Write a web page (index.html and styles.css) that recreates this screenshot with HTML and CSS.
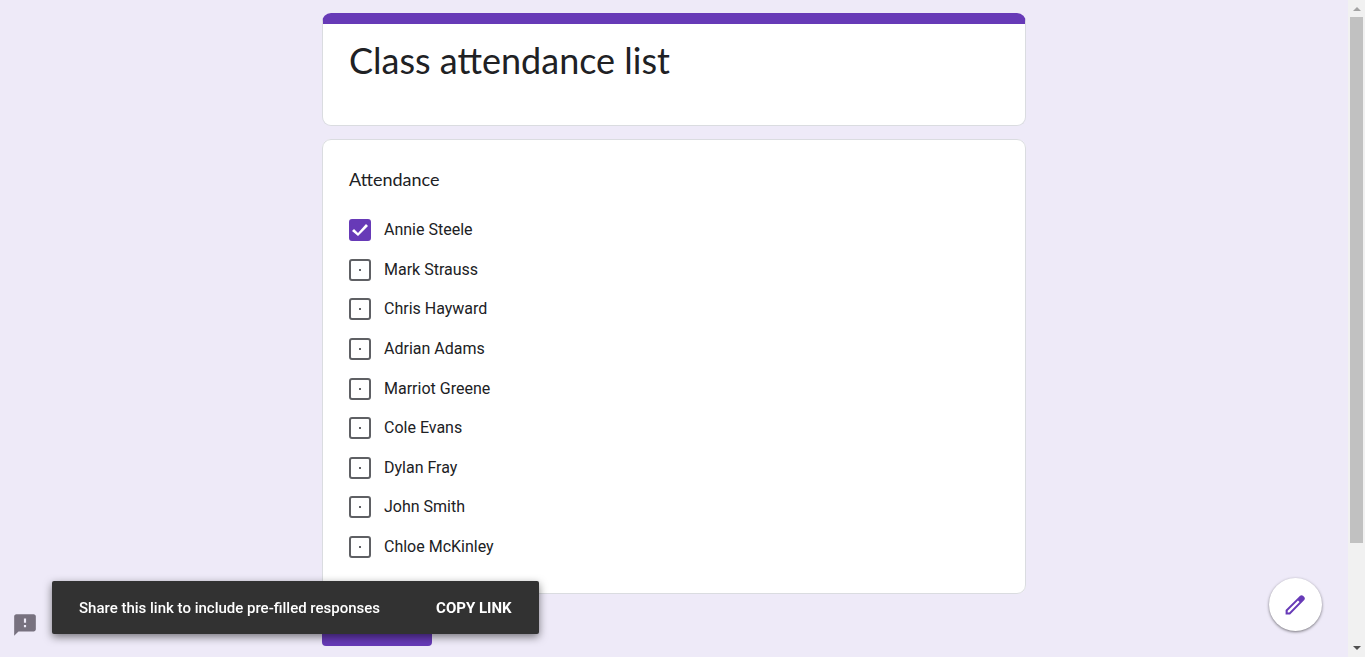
FILE: index.html
```html
<!DOCTYPE html>
<html lang="en">
<head>
    <meta charset="UTF-8">
    <meta name="viewport" content="width=device-width, initial-scale=1.0">
    <title>Class attendance list</title>
    <link rel="stylesheet" href="styles.css">
</head>
<body>

<div class="page">
    <form class="form">
        <header class="card form-header">
            <h1>Class attendance list</h1>
        </header>

        <fieldset class="card question">
            <legend>Attendance</legend>
            <div class="options">
                <label class="option"><input type="checkbox" name="attendance" checked> Annie Steele</label>
                <label class="option"><input type="checkbox" name="attendance"> Mark Strauss</label>
                <label class="option"><input type="checkbox" name="attendance"> Chris Hayward</label>
                <label class="option"><input type="checkbox" name="attendance"> Adrian Adams</label>
                <label class="option"><input type="checkbox" name="attendance"> Marriot Greene</label>
                <label class="option"><input type="checkbox" name="attendance"> Cole Evans</label>
                <label class="option"><input type="checkbox" name="attendance"> Dylan Fray</label>
                <label class="option"><input type="checkbox" name="attendance"> John Smith</label>
                <label class="option"><input type="checkbox" name="attendance"> Chloe McKinley</label>
            </div>
        </fieldset>

        <button type="button" class="get-link" aria-label="Get link"></button>
    </form>
</div>

<div class="scrollbar" aria-hidden="true">
    <svg width="17" height="17" viewBox="0 0 17 17"><path d="M5 11h8L9 7z" fill="#a3a3a3"/></svg>
    <div class="scroll-thumb"></div>
    <svg width="17" height="17" viewBox="0 0 17 17"><path d="M5 6h8l-4 4z" fill="#505050"/></svg>
</div>

<button type="button" class="report" aria-label="Report a problem">
    <svg width="26" height="26" viewBox="0 0 24 24"><path d="M20 2H4c-1.100 0-1.990.900-1.990 2L2 22l4-4h14c1.100 0 2-.900 2-2V4c0-1.100-.900-2-2-2zm-7 12h-2v-2h2v2zm0-4h-2V6h2v4z" fill="#77717f"/></svg>
</button>

<div class="toast" role="status">
    <span>Share this link to include pre-filled responses</span>
    <button type="button" class="copy-link">COPY LINK</button>
</div>

<button type="button" class="edit" aria-label="Edit this form">
    <svg width="25" height="25" viewBox="0 0 24 24"><path fill-rule="evenodd" d="M20.400 4.800l-1.200-1.200c-.800-.800-2-.800-2.800 0L2.500 17.200V21.500h4.300L20.400 7.600c.800-.800.800-2 0-2.800zM6 19.600H4.500v-1.500L14.400 8.100l1.500 1.500z" fill="#673ab7"/></svg>
</button>

</body>
</html>
```

FILE: styles.css
```css
* {
    box-sizing: border-box;
}
body {
    margin: 0;
    height: 100vh;
    overflow: hidden;
    display: flex;
    background: #eeeaf8;
    color: #202124;
    font-family: Roboto, sans-serif;
    font-size: 15px;
}
button {
    border: none;
    padding: 0;
    cursor: pointer;
    font-family: inherit;
}
svg {
    display: block;
}
.page {
    flex: 1;
    padding-top: 13px;
}
.form {
    max-width: 704px;
    margin: 0 auto;
}
.card {
    margin: 0 0 13px;
    background: white;
    border: 1px solid #dadce0;
    border-radius: 9px;
}
.form-header {
    padding: 13px 26px 42px;
    border-top: 11px solid #673ab7;
}
h1 {
    margin: 0;
    font-family: "Google Sans", Lato, sans-serif;
    font-size: 36px;
    font-weight: 400;
    line-height: 46px;
}
.question {
    padding: 27px 26px 35px;
}
legend {
    float: left;
    width: 100%;
    padding: 0;
    margin-bottom: 28px;
    font-family: "Google Sans", Lato, sans-serif;
    font-size: 18px;
    line-height: 24px;
}
.options {
    clear: both;
    min-height: 339px;
    display: flex;
    flex-direction: column;
    justify-content: space-between;
}
.option {
    display: flex;
    align-items: center;
    gap: 13px;
    font-size: 16px;
    line-height: 22px;
}
.option input {
    appearance: none;
    display: grid;
    place-content: center;
    width: 22px;
    height: 22px;
    margin: 0;
    border: 2px solid #5f6064;
    border-radius: 3px;
}
.option input::after {
    content: "";
    width: 2px;
    height: 2px;
    background: #5f6064;
}
.option input:checked {
    background: #673ab7;
    border-color: #673ab7;
}
.option input:checked::after {
    width: 16px;
    height: 12px;
    background: white;
    clip-path: polygon(0 7px, 2px 5px, 6px 9px, 14px 0, 16px 2px, 6px 12px);
}
.get-link {
    display: block;
    width: 110px;
    height: 39px;
    border-radius: 4px;
    background: #673ab7;
}
.scrollbar {
    width: 17px;
    display: flex;
    flex-direction: column;
    background: #f1f1f1;
}
.scroll-thumb {
    height: 80vh;
    margin: 0 2px auto;
    background: #c1c1c1;
}
.report {
    position: fixed;
    left: 12px;
    bottom: 19px;
    background: none;
}
.toast {
    position: fixed;
    left: 52px;
    bottom: 23px;
    display: flex;
    align-items: center;
    gap: 56px;
    padding: 17px 27px 15px;
    border-radius: 2px;
    background: #323232;
    color: white;
    line-height: 21px;
    font-weight: 500;
    box-shadow: 0 3px 9px rgba(0, 0, 0, 0.5);
}
.copy-link {
    background: none;
    color: white;
    font-size: 15px;
    font-weight: 700;
    line-height: 21px;
}
.edit {
    position: fixed;
    right: 43px;
    bottom: 26px;
    width: 53px;
    height: 53px;
    display: grid;
    place-content: center;
    border-radius: 50%;
    background: white;
    box-shadow: 0 1px 3px rgba(0, 0, 0, 0.5);
}
```
